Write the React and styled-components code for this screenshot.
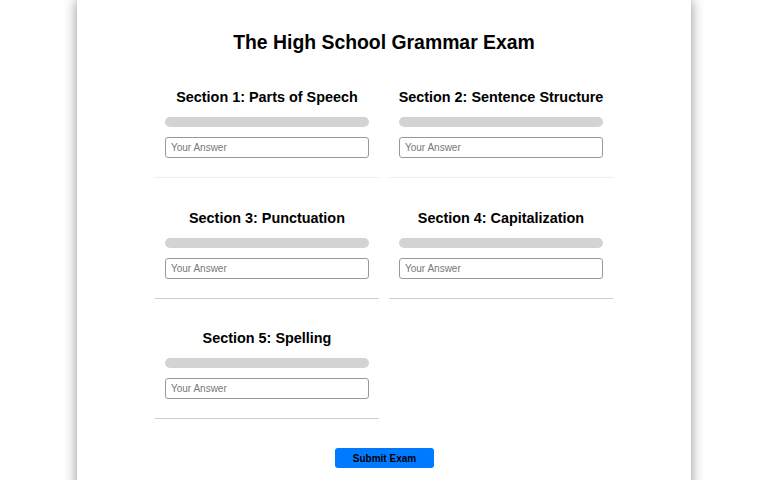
import styled, { createGlobalStyle } from "styled-components";

const sections = [
  "Section 1: Parts of Speech",
  "Section 2: Sentence Structure",
  "Section 3: Punctuation",
  "Section 4: Capitalization",
  "Section 5: Spelling",
];

const App = () => {
  return (
    <>
      <GlobalStyle />
      <Page>
        <Title>The High School Grammar Exam</Title>
        <Grid>
          {sections.map((name, i) => (
            <Section key={name} $faint={i < 2}>
              <Heading>{name}</Heading>
              <Bar />
              <Answer type="text" placeholder="Your Answer" />
            </Section>
          ))}
        </Grid>
        <Submit>Submit Exam</Submit>
      </Page>
    </>
  );
};

const GlobalStyle = createGlobalStyle`
  body {
    margin: 0;
    background: #fff;
    font-family: "Liberation Sans", Arial, sans-serif;
  }
`;

const Page = styled.div`
  width: 80%;
  min-height: 500px;
  margin: 0 auto;
  padding: 31px 0 0;
  box-sizing: border-box;
  background: #fff;
  box-shadow: 0 0 12px rgba(0, 0, 0, 0.45);
  display: flex;
  flex-direction: column;
  align-items: center;
`;

const Title = styled.h1`
  margin: 0;
  font-size: 19.4px;
  line-height: 23px;
  color: #000;
`;

const Grid = styled.div`
  width: 458px;
  margin-top: 14px;
  display: grid;
  grid-template-columns: minmax(0, 1fr) minmax(0, 1fr);
  column-gap: 10px;
  row-gap: 10.5px;
`;

const Section = styled.div`
  padding: 21px 10px 19px;
  border-bottom: 1px solid ${(p) => (p.$faint ? "#eeeeee" : "#cccccc")};
  display: flex;
  flex-direction: column;
  align-items: center;
`;

const Heading = styled.h3`
  margin: 0 0 11px;
  font-size: 14.4px;
  line-height: 17px;
  color: #000;
  white-space: nowrap;
`;

const Bar = styled.div`
  width: 100%;
  height: 10px;
  border-radius: 5px;
  background: #d3d3d3;
  margin-bottom: 10px;
`;

const Answer = styled.input`
  width: 100%;
  height: 21px;
  box-sizing: border-box;
  padding: 0 5px;
  border: 1px solid #999;
  border-radius: 3px;
  font-family: "Liberation Sans", Arial, sans-serif;
  font-size: 10px;
  &::placeholder {
    color: #777;
  }
`;

const Submit = styled.button`
  margin: 29px 0 0 1px;
  width: 99px;
  height: 20px;
  border: none;
  border-radius: 3px;
  background: #007bff;
  color: #000;
  font-family: "Liberation Sans", Arial, sans-serif;
  font-size: 10px;
  font-weight: bold;
  cursor: pointer;
`;

export default App;
